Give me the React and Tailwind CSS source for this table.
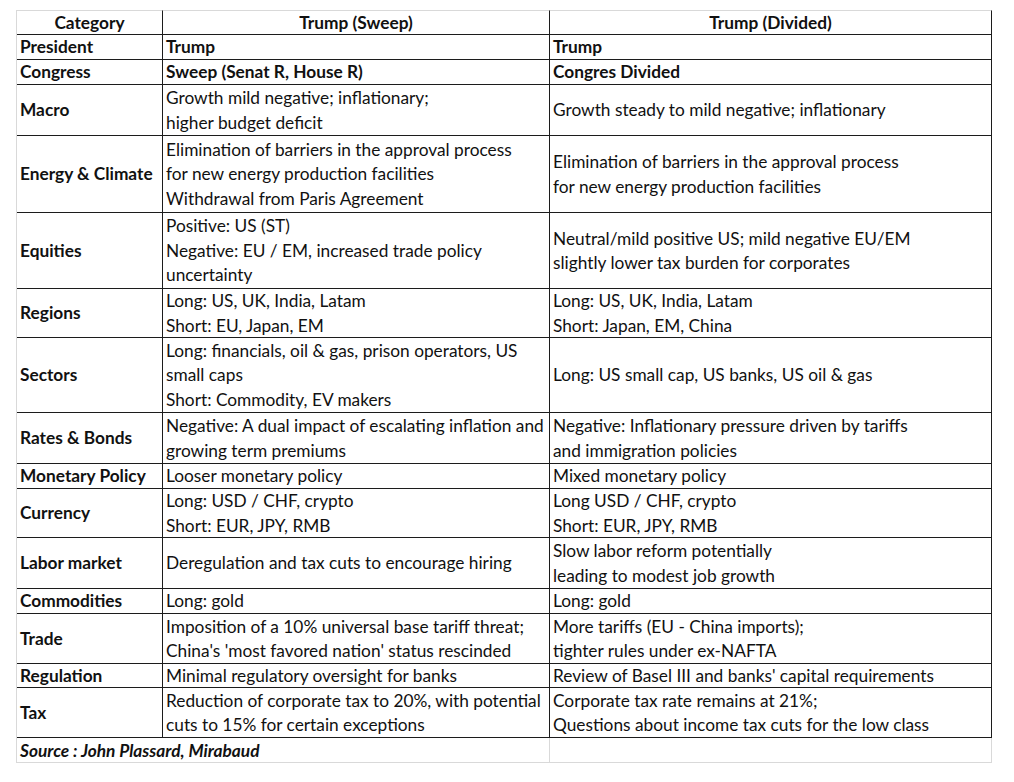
import React from 'react';

// heights follow the spreadsheet rows in the screenshot
const rows = [
  { cat: 'President', h: 'h-[25px]', bold: true, a: ['Trump'], b: ['Trump'] },
  { cat: 'Congress', h: 'h-[25px]', bold: true, a: ['Sweep (Senat R, House R)'], b: ['Congres Divided'] },
  { cat: 'Macro', h: 'h-[51px]', a: ['Growth mild negative; inflationary;', 'higher budget deficit'], b: ['Growth steady to mild negative; inflationary'] },
  {
    cat: 'Energy & Climate', h: 'h-[77px]',
    a: ['Elimination of barriers in the approval process', 'for new energy production facilities', 'Withdrawal from Paris Agreement'],
    b: ['Elimination of barriers in the approval process', 'for new energy production facilities'],
  },
  {
    cat: 'Equities', h: 'h-[76px]',
    a: ['Positive: US (ST)', 'Negative: EU / EM, increased trade policy', 'uncertainty'],
    b: ['Neutral/mild positive US; mild negative EU/EM', 'slightly lower tax burden for corporates'],
  },
  { cat: 'Regions', h: 'h-[49px]', a: ['Long: US, UK, India, Latam', 'Short: EU, Japan, EM'], b: ['Long: US, UK, India, Latam', 'Short: Japan, EM, China'] },
  {
    cat: 'Sectors', h: 'h-[75px]',
    a: ['Long: financials, oil & gas, prison operators, US', 'small caps', 'Short: Commodity, EV makers'],
    b: ['Long: US small cap, US banks, US oil & gas'],
  },
  {
    cat: 'Rates & Bonds', h: 'h-[51px]',
    a: ['Negative: A dual impact of escalating inflation and', 'growing term premiums'],
    b: ['Negative: Inflationary pressure driven by tariffs', 'and immigration policies'],
  },
  { cat: 'Monetary Policy', h: 'h-[25px]', a: ['Looser monetary policy'], b: ['Mixed monetary policy'] },
  { cat: 'Currency', h: 'h-[49px]', a: ['Long: USD / CHF, crypto', 'Short: EUR, JPY, RMB'], b: ['Long USD / CHF, crypto', 'Short: EUR, JPY, RMB'] },
  { cat: 'Labor market', h: 'h-[51px]', a: ['Deregulation and tax cuts to encourage hiring'], b: ['Slow labor reform potentially', 'leading to modest job growth'] },
  { cat: 'Commodities', h: 'h-[25px]', a: ['Long: gold'], b: ['Long: gold'] },
  {
    cat: 'Trade', h: 'h-[50px]',
    a: ["Imposition of a 10% universal base tariff threat;", "China's 'most favored nation' status rescinded"],
    b: ['More tariffs (EU - China imports);', 'tighter rules under ex-NAFTA'],
  },
  { cat: 'Regulation', h: 'h-[24px]', a: ['Minimal regulatory oversight for banks'], b: ["Review of Basel III and banks' capital requirements"] },
  {
    cat: 'Tax', h: 'h-[50px]',
    a: ['Reduction of corporate tax to 20%, with potential', 'cuts to 15% for certain exceptions'],
    b: ['Corporate tax rate remains at 21%;', 'Questions about income tax cuts for the low class'],
  },
];

function Cell({ lines, h, bold }) {
  return (
    <div className={`${h} flex flex-col justify-center border-r border-b border-[#1c1c1c] pl-[3px] pt-[1px] whitespace-nowrap overflow-hidden ${bold ? 'font-bold' : ''}`}>
      {lines.map((l, i) => (
        <div key={i} className="leading-[24.5px]">{l}</div>
      ))}
    </div>
  );
}

export default function App() {
  return (
    <div className="min-h-screen bg-white pt-[10px] pl-[16px] text-[#111] text-[17.3px] font-['Lato',sans-serif]">
      <div className="grid w-fit grid-cols-[146px_387px_442px] border-l border-[#d9d9d9]">
        <div className="h-[25px] flex items-center justify-center pt-[1px] border-t border-[#d9d9d9] border-r border-b border-r-[#1c1c1c] border-b-[#1c1c1c] font-bold">Category</div>
        <div className="h-[25px] flex items-center justify-center pt-[1px] border-t border-[#d9d9d9] border-r border-b border-r-[#1c1c1c] border-b-[#1c1c1c] font-bold">Trump (Sweep)</div>
        <div className="h-[25px] flex items-center justify-center pt-[1px] border-t border-[#d9d9d9] border-r border-b border-r-[#1c1c1c] border-b-[#1c1c1c] font-bold">Trump (Divided)</div>

        {rows.map((r) => (
          <React.Fragment key={r.cat}>
            <Cell lines={[r.cat]} h={r.h} bold />
            <Cell lines={r.a} h={r.h} bold={r.bold} />
            <Cell lines={r.b} h={r.h} bold={r.bold} />
          </React.Fragment>
        ))}

        <div className="col-span-2 h-[25px] flex items-center pl-[3px] pt-[1px] border-r border-b border-[#d9d9d9] font-bold italic">
          Source : John Plassard, Mirabaud
        </div>
        <div className="h-[25px] border-r border-b border-[#d9d9d9]"></div>
      </div>
    </div>
  );
}
